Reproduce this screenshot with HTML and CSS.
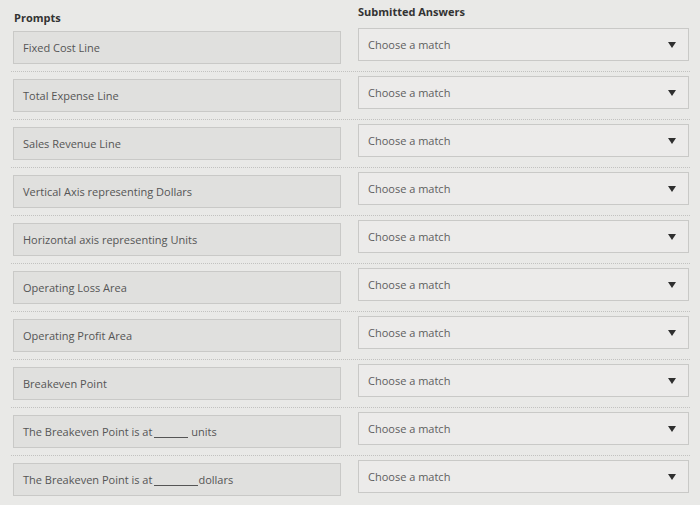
FILE: index.html
```html
<!DOCTYPE html>
<html>
<head>
<meta charset="utf-8">
<link rel="stylesheet" href="styles.css">
</head>
<body>
<div class="page">
  <div class="head">
    <div class="h h-left">Prompts</div>
    <div class="h h-right">Submitted Answers</div>
  </div>
  <div class="list">
    <div class="row"><div class="prompt">Fixed Cost Line</div><div class="select">Choose a match<span class="arrow"></span></div></div>
    <div class="sep"></div>
    <div class="row"><div class="prompt">Total Expense Line</div><div class="select">Choose a match<span class="arrow"></span></div></div>
    <div class="sep"></div>
    <div class="row"><div class="prompt">Sales Revenue Line</div><div class="select">Choose a match<span class="arrow"></span></div></div>
    <div class="sep"></div>
    <div class="row"><div class="prompt">Vertical Axis representing Dollars</div><div class="select">Choose a match<span class="arrow"></span></div></div>
    <div class="sep"></div>
    <div class="row"><div class="prompt">Horizontal axis representing Units</div><div class="select">Choose a match<span class="arrow"></span></div></div>
    <div class="sep"></div>
    <div class="row"><div class="prompt">Operating Loss Area</div><div class="select">Choose a match<span class="arrow"></span></div></div>
    <div class="sep"></div>
    <div class="row"><div class="prompt">Operating Profit Area</div><div class="select">Choose a match<span class="arrow"></span></div></div>
    <div class="sep"></div>
    <div class="row"><div class="prompt">Breakeven Point</div><div class="select">Choose a match<span class="arrow"></span></div></div>
    <div class="sep"></div>
    <div class="row"><div class="prompt">The Breakeven Point is at<span class="blank b1"></span>&nbsp;units</div><div class="select">Choose a match<span class="arrow"></span></div></div>
    <div class="sep"></div>
    <div class="row"><div class="prompt">The Breakeven Point is at<span class="blank b2"></span>dollars</div><div class="select">Choose a match<span class="arrow"></span></div></div>
  </div>
</div>
</body>
</html>
```
FILE: styles.css
```css
html, body {
  margin: 0;
  padding: 0;
}
body {
  background: #e9e9e7;
  font-family: "Open Sans", "Noto Sans", sans-serif;
  color: #555;
  width: 700px;
  height: 505px;
  overflow: hidden;
}
.page {
  padding: 0 10px 0 13px;
}
.head {
  display: grid;
  grid-template-columns: 328px 331px;
  column-gap: 17px;
  height: 29px;
}
.h {
  font-size: 11px;
  font-weight: 700;
  color: #333;
  line-height: 14px;
}
.h-left {
  padding-top: 11px;
  padding-left: 1px;
}
.h-right {
  padding-top: 5px;
}
.row {
  display: grid;
  grid-template-columns: 328px 331px;
  column-gap: 17px;
  align-items: start;
}
.prompt, .select {
  height: 31px;
  border: 1px solid #c9c9c7;
  display: flex;
  align-items: center;
  padding-left: 9px;
  font-size: 11px;
  color: #555;
  box-sizing: content-box;
}
.prompt {
  background: #e0e0de;
  margin-top: 2px;
}
.select {
  background: #ecebea;
  position: relative;
  margin-top: -1px;
  color: #5e5e5e;
}
.arrow {
  position: absolute;
  right: 12px;
  top: 13px;
  width: 0;
  height: 0;
  border-left: 4px solid transparent;
  border-right: 4px solid transparent;
  border-top: 6px solid #2f2f2f;
}
.blank {
  display: inline-block;
  border-bottom: 1px solid #555;
  height: 10px;
  margin-left: 2px;
  position: relative;
  top: 1px;
}
.b1 { width: 34px; }
.b2 { width: 44px; }
.sep {
  height: 0;
  border-top: 1px dotted #c2c2c0;
  margin: 7px 0 5px -2px;
  width: 679px;
}
```
